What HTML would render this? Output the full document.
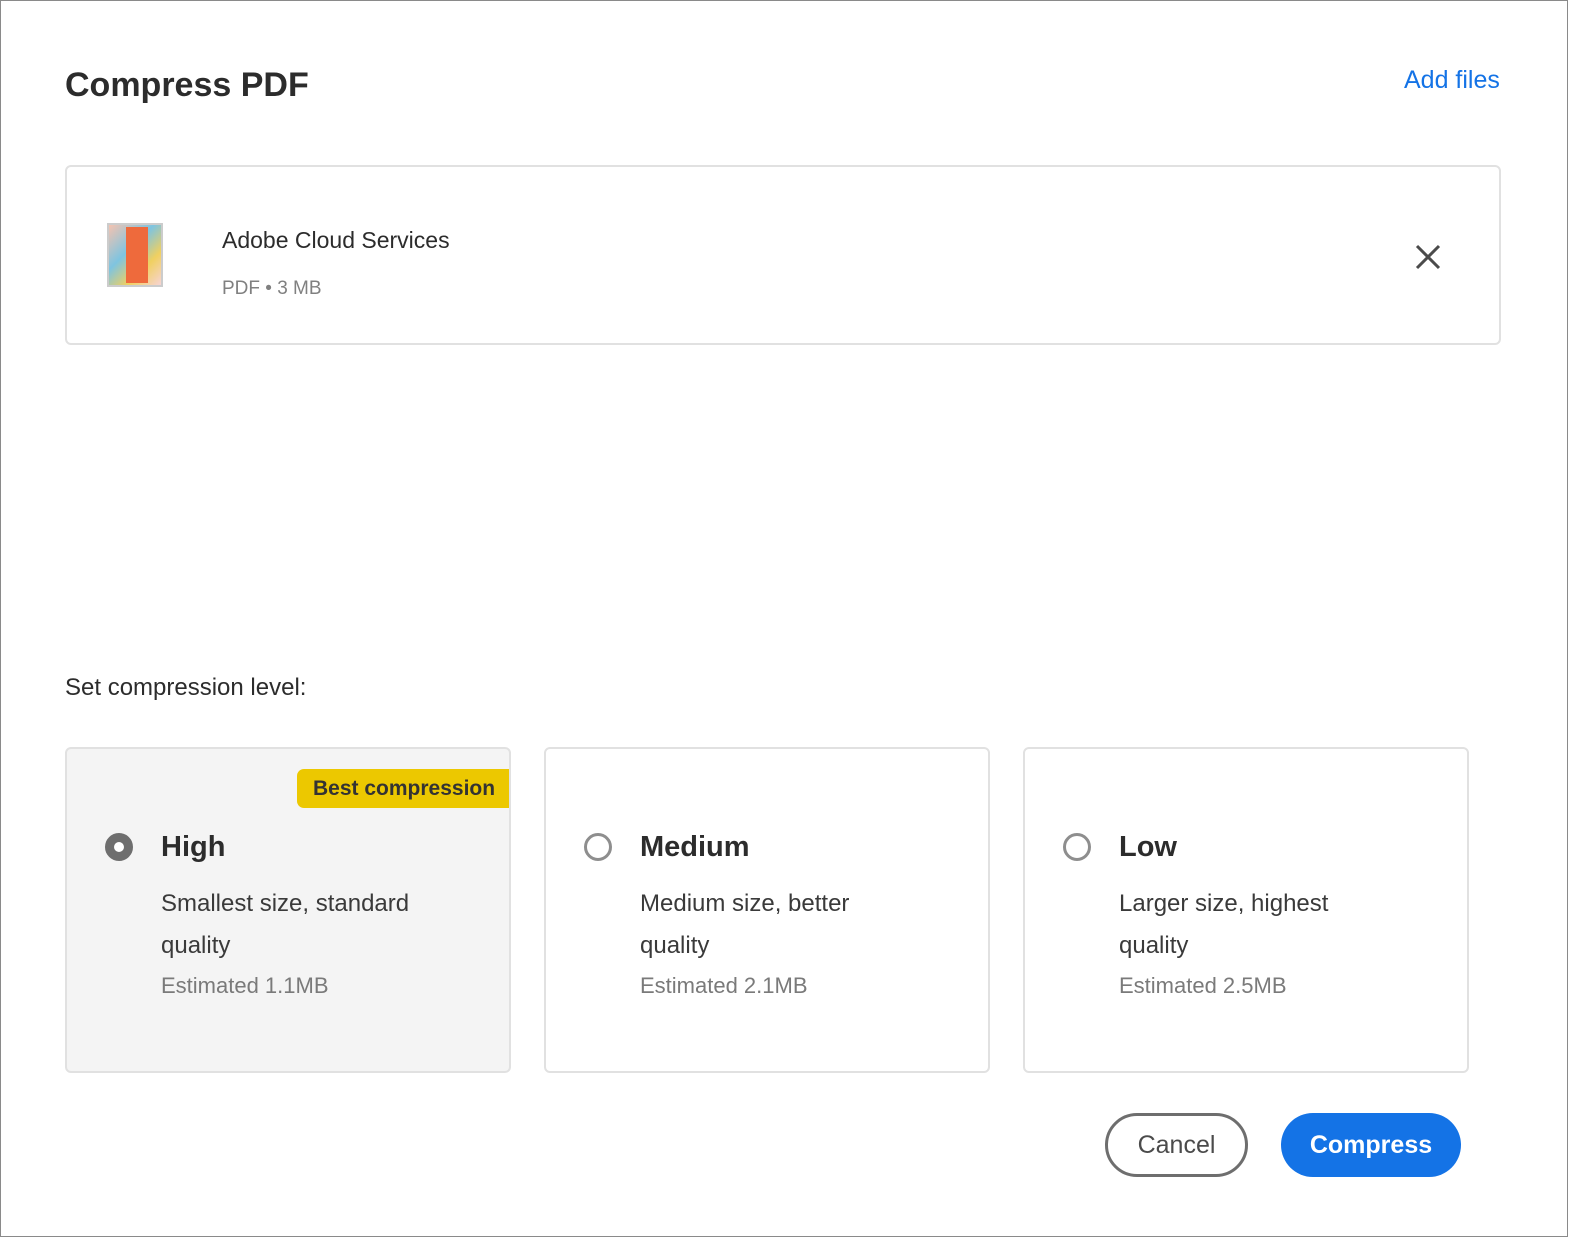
<!DOCTYPE html>
<html><head><style>
*{margin:0;padding:0;box-sizing:border-box}
body{width:1572px;height:1240px;background:#fff;font-family:"Liberation Sans",sans-serif;position:relative;overflow:hidden}
.frame{position:absolute;left:0;top:0;width:1568px;height:1237px;border:1.5px solid #8a8a8a}
.abs{position:absolute;white-space:nowrap}
.title{left:65px;top:66px;font-size:34px;font-weight:bold;color:#2c2c2c}
.add{left:1404px;top:66px;font-size:25px;color:#1473e6}
.file{position:absolute;left:65px;top:165px;width:1436px;height:180px;border:2px solid #e1e1e1;border-radius:6px}
.thumb{position:absolute;left:107px;top:223px;width:56px;height:64px;border:2px solid #ccc;background:linear-gradient(135deg,#f4c3b0,#7ec4e0 40%,#f0d060 70%,#f7d4d4)}
.thumb:after{content:"";position:absolute;left:17px;top:2px;width:22px;height:56px;background:#ee6a3c}
.card{position:absolute;top:747px;width:446px;height:326px;border:2px solid #e1e1e1;border-radius:6px;background:#fff}
.radio{position:absolute;left:38px;top:84px;width:28px;height:28px;border-radius:50%;border:3px solid #8e8e8e;background:#fff}
.sel .radio{border:9px solid #6e6e6e}
.h{position:absolute;left:94px;top:82px;font-size:29px;font-weight:bold;color:#2c2c2c}
.d{position:absolute;left:94px;top:134px;font-size:24px;line-height:42px;color:#3a3a3a;width:255px;white-space:normal}
.e{position:absolute;left:94px;top:224px;font-size:22px;color:#7a7a7a}
.btn{position:absolute;top:1113px;height:64px;border-radius:32px;font-size:25px;text-align:center;line-height:58px}
</style></head><body>
<div class="frame"></div>
<div class="abs title">Compress PDF</div>
<div class="abs add">Add files</div>
<div class="file"></div>
<div class="thumb"></div>
<div class="abs" style="left:222px;top:227px;font-size:23px;color:#2c2c2c">Adobe Cloud Services</div>
<div class="abs" style="left:222px;top:278px;font-size:19px;color:#808080">PDF • 3 MB</div>
<svg class="abs" style="left:1415px;top:244px" width="26" height="26"><path d="M2 2L24 24M24 2L2 24" stroke="#4b4b4b" stroke-width="3"/></svg>
<div class="abs" style="left:65px;top:674px;font-size:24px;color:#2c2c2c">Set compression level:</div>
<div class="card sel" style="left:65px;background:#f4f4f4">
 <div class="abs" style="right:0;top:20px;height:39px;width:212px;background:#ecc800;border-radius:7px 0 0 7px;font-size:21px;font-weight:bold;color:#333;line-height:39px;padding-left:16px">Best compression</div>
 <div class="radio"></div><div class="h">High</div>
 <div class="d">Smallest size, standard quality</div><div class="e">Estimated 1.1MB</div>
</div>
<div class="card" style="left:544px">
 <div class="radio"></div><div class="h">Medium</div>
 <div class="d">Medium size, better quality</div><div class="e">Estimated 2.1MB</div>
</div>
<div class="card" style="left:1023px">
 <div class="radio"></div><div class="h">Low</div>
 <div class="d">Larger size, highest quality</div><div class="e">Estimated 2.5MB</div>
</div>
<div class="btn" style="left:1105px;width:143px;border:3px solid #6e6e6e;color:#4b4b4b">Cancel</div>
<div class="btn" style="left:1281px;width:180px;background:#1473e6;color:#fff;font-weight:bold;line-height:64px">Compress</div>
</body></html>
